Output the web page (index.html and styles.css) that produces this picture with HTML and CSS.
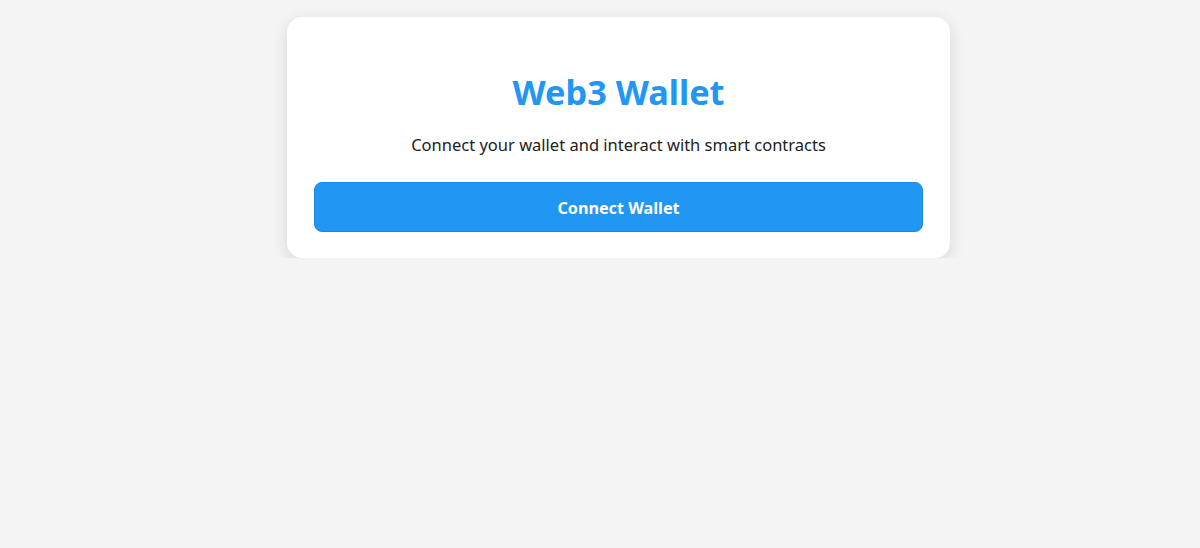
FILE: index.html
```html
<!DOCTYPE html>
<html lang="en">
<head>
<meta charset="utf-8">
<title>Web3 Wallet</title>
<link rel="stylesheet" href="styles.css">
</head>
<body>
<main class="page">
  <section class="card">
    <h1 class="title">Web3 Wallet</h1>
    <p class="subtitle">Connect your wallet and interact with smart contracts</p>
    <button class="connect-btn" type="button">Connect Wallet</button>
  </section>
</main>
</body>
</html>
```

FILE: styles.css
```css
html, body {
  margin: 0;
  padding: 0;
  background: #f4f4f4;
  font-family: "Noto Sans", "Open Sans", "Liberation Sans", sans-serif;
  color: #333;
}

.page {
  padding: 17px 0 0 287px;
}

.card {
  box-sizing: border-box;
  width: 663px;
  background: #fff;
  border-radius: 15px;
  padding: 27px 27px 26px;
  box-shadow: 0 4px 16px rgba(0, 0, 0, 0.12);
  text-align: center;
}

.title {
  margin: 26px 0 0;
  font-size: 34.3px;
  line-height: 44px;
  font-weight: 700;
  color: #2196f3;
}

.subtitle {
  margin: 19px 0 0;
  font-size: 16.5px;
  line-height: 24px;
  color: #222;
}

.connect-btn {
  display: block;
  box-sizing: border-box;
  width: 100%;
  height: 50px;
  margin-top: 25px;
  padding-top: 2px;
  border: 1px solid #1a8ae6;
  border-radius: 8px;
  background: #2196f3;
  color: #fff;
  font-family: inherit;
  font-size: 16.2px;
  font-weight: 700;
  cursor: pointer;
}
```
